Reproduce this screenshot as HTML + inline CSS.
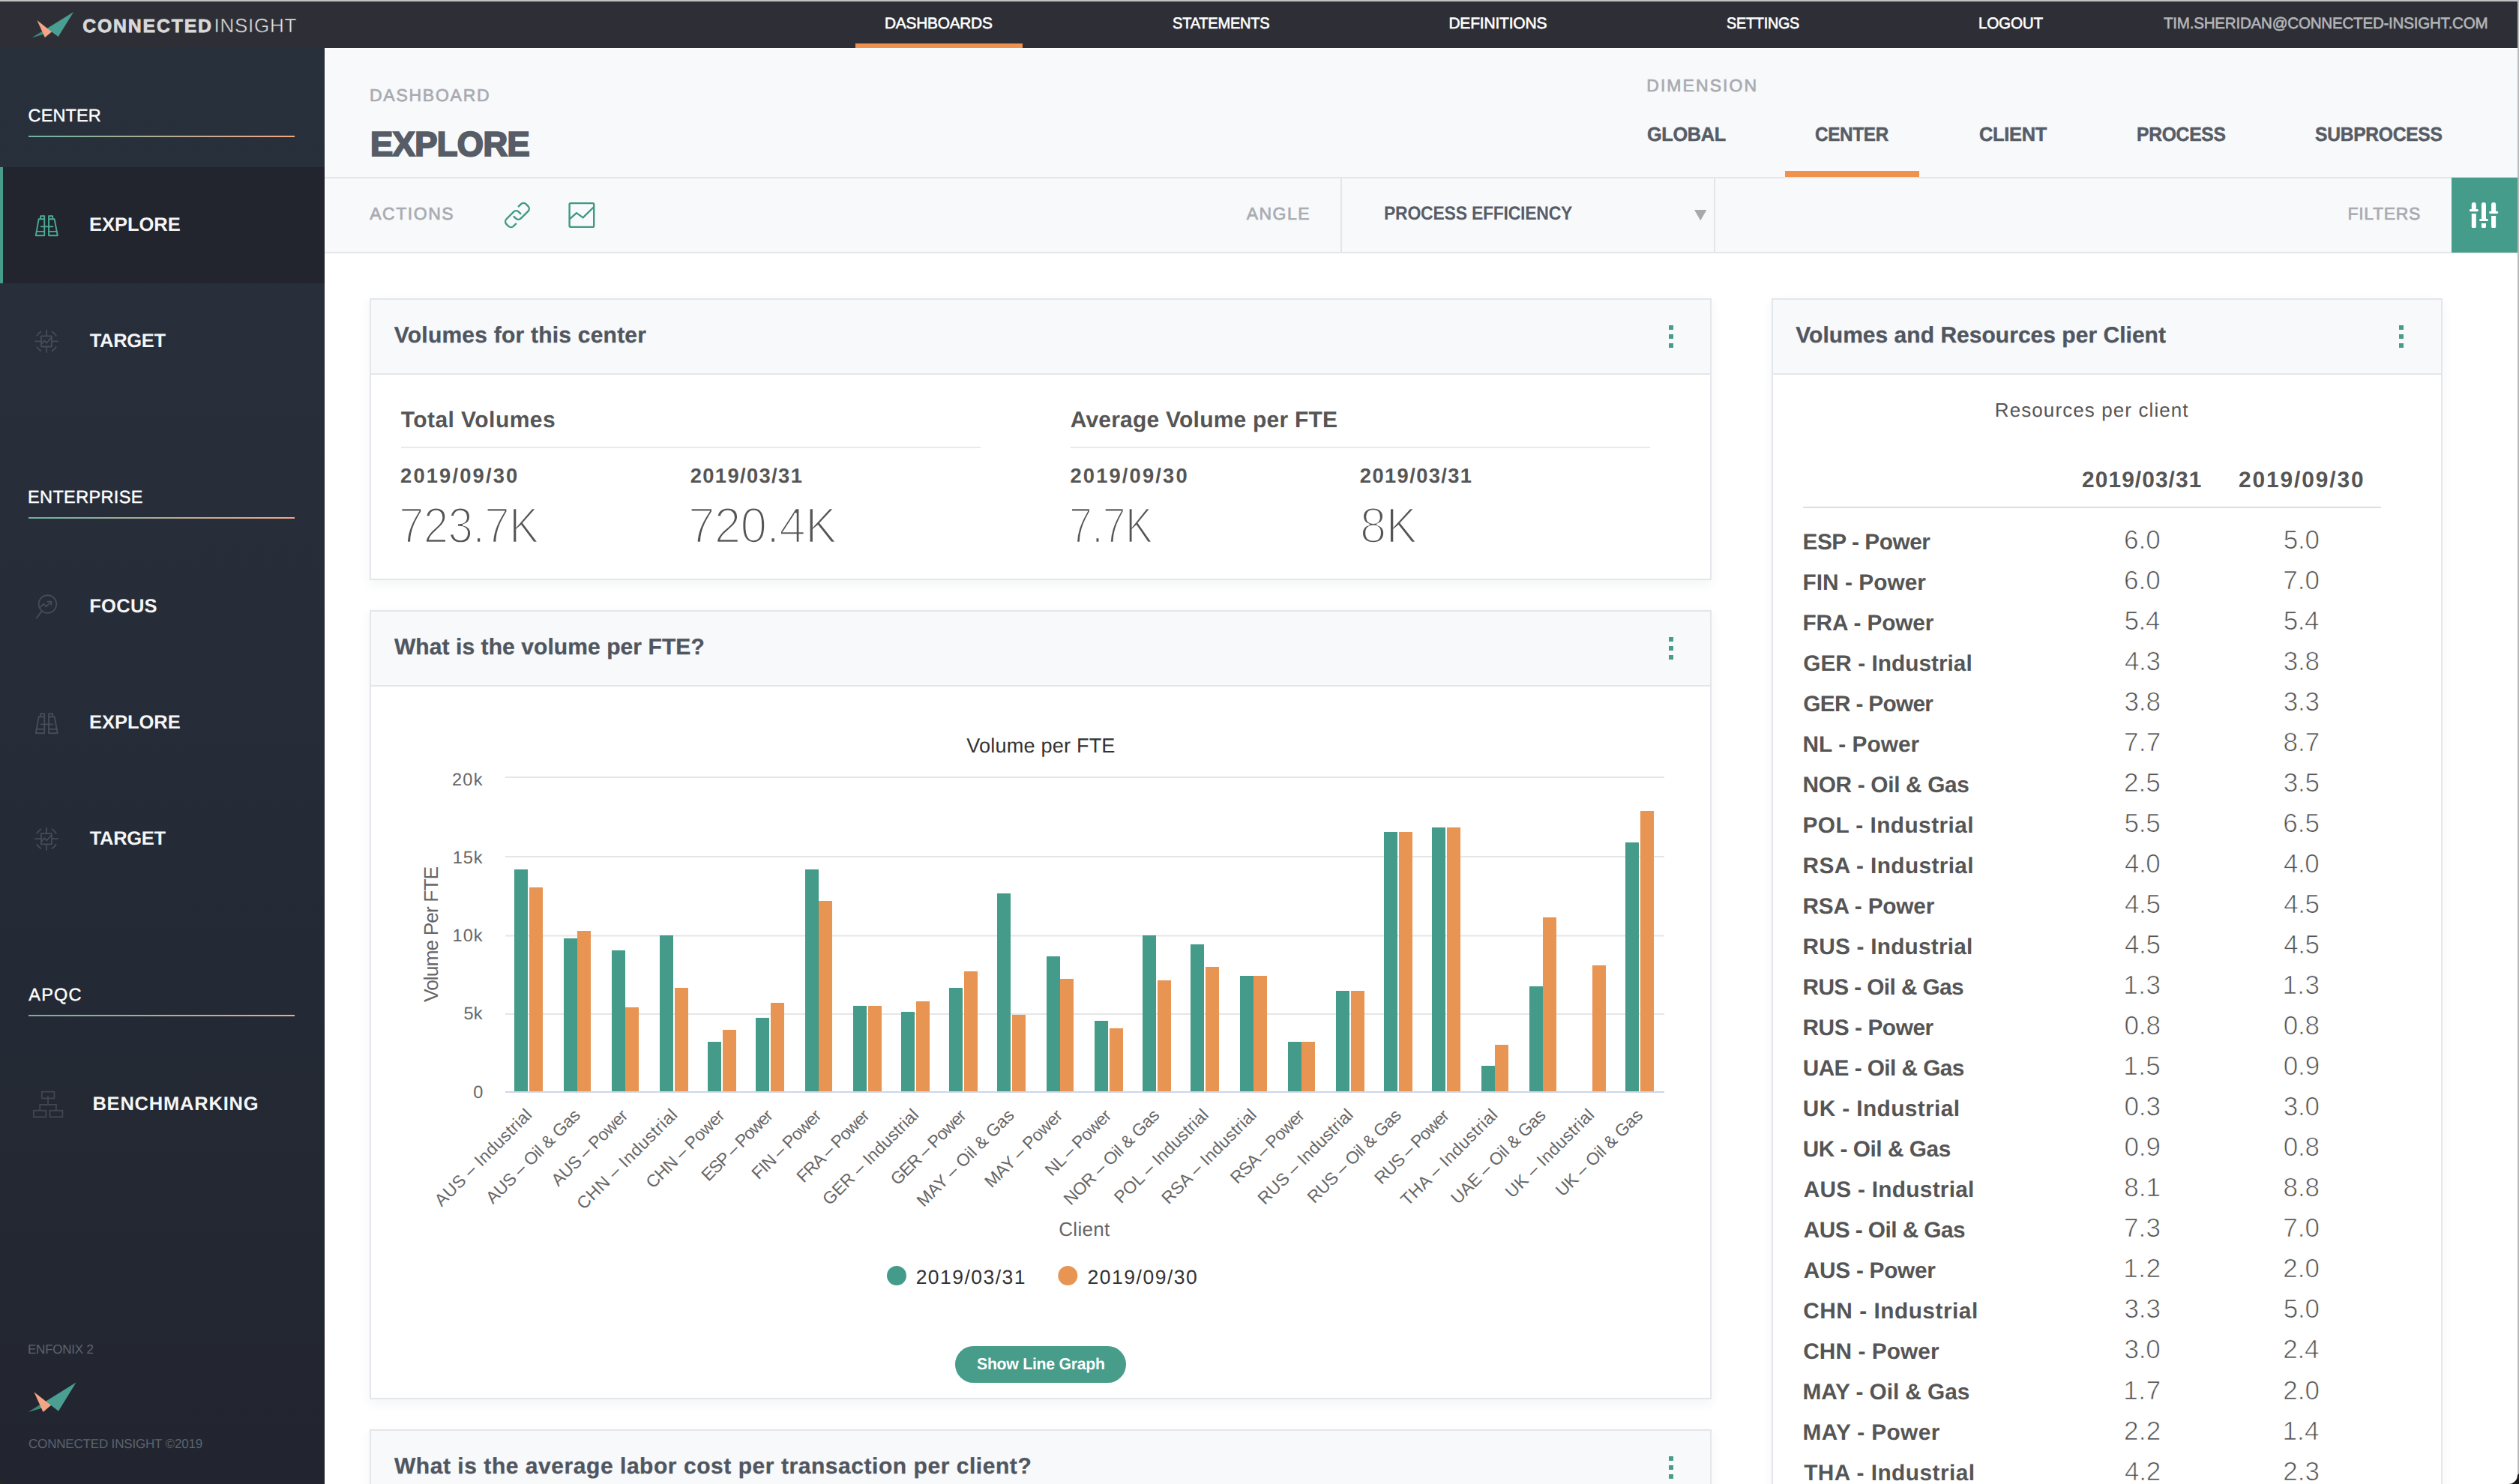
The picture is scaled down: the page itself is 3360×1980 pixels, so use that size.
<!DOCTYPE html>
<html lang="en"><head><meta charset="utf-8"><title>Connected Insight - Explore</title>
<style>
html,body{margin:0;padding:0}
body{width:3360px;height:1980px;position:relative;overflow:hidden;background:#fff;font-family:"Liberation Sans",sans-serif;}
.t{position:absolute;white-space:nowrap;line-height:1;transform-origin:0 50%;text-rendering:geometricPrecision;}
.a{position:absolute;}
.thin{-webkit-text-stroke:1.1px #fff;}
.card{position:absolute;box-sizing:border-box;border:2px solid #e4e6eb;background:#fff;box-shadow:0 5px 14px rgba(40,50,70,0.055);}
.chd{position:absolute;left:0;top:0;right:0;height:98px;background:#f8f9fb;border-bottom:2px solid #e4e6eb;}
.dots{position:absolute;width:6px;height:6px;background:#479d8a;box-shadow:0 12px 0 #479d8a,0 24px 0 #479d8a;}
.gl{position:absolute;height:2px;background:linear-gradient(90deg,#6cb3a0,#f5a685);left:38px;width:355px;}
</style></head>
<body>
<div class="a" style="left:0;top:0;width:3360px;height:64px;background:#2e2f36"></div>
<div class="a" style="left:0;top:0;width:3360px;height:2px;background:#c2c2c2"></div>
<svg class="a" style="left:0;top:0" width="440" height="1980" viewBox="0 0 440 1980"><polygon points="43.3,49.9 98.1,15.9 77.7,49.1 69.0,42.4" fill="#4a9e92"/><polygon points="43.3,49.9 55.9,42.0 57.0,45.6" fill="#3c8576"/><polygon points="49.4,27.1 69.0,42.4 59.9,50.1" fill="#f4a585"/></svg>
<span class="t" id="t0" style="left:110.18px;top:24px;font-size:24.8px;font-weight:700;color:#d9d9d9;letter-spacing:1.850px;-webkit-text-stroke:0.8px #d9d9d9;">CONNECTED</span>
<span class="t" id="t1" style="left:285.60px;top:21px;font-size:26px;font-weight:400;color:#dcdcdc;letter-spacing:0.707px;-webkit-text-stroke:0.4px #2e2f36;">INSIGHT</span>
<span class="t" id="t2" style="left:1180.49px;top:21px;font-size:21px;font-weight:400;color:#ffffff;letter-spacing:-0.252px;transform:scaleX(0.9938);-webkit-text-stroke:0.6px #ffffff;">DASHBOARDS</span>
<span class="t" id="t3" style="left:1563.79px;top:21px;font-size:21px;font-weight:400;color:#ffffff;letter-spacing:-0.252px;transform:scaleX(0.9554);-webkit-text-stroke:0.6px #ffffff;">STATEMENTS</span>
<span class="t" id="t4" style="left:1932.38px;top:21px;font-size:21px;font-weight:400;color:#ffffff;letter-spacing:-0.193px;-webkit-text-stroke:0.6px #ffffff;">DEFINITIONS</span>
<span class="t" id="t5" style="left:2302.70px;top:21px;font-size:21px;font-weight:400;color:#ffffff;letter-spacing:-0.252px;transform:scaleX(0.9424);-webkit-text-stroke:0.6px #ffffff;">SETTINGS</span>
<span class="t" id="t6" style="left:2639.20px;top:21px;font-size:21px;font-weight:400;color:#ffffff;letter-spacing:-0.252px;transform:scaleX(0.9857);-webkit-text-stroke:0.6px #ffffff;">LOGOUT</span>
<span class="t" id="t7" style="left:2885.94px;top:21px;font-size:21px;font-weight:400;color:#b4b5b8;letter-spacing:-0.252px;transform:scaleX(0.9807);-webkit-text-stroke:0.6px #b4b5b8;">TIM.SHERIDAN@CONNECTED-INSIGHT.COM</span>
<div class="a" style="left:1141px;top:58px;width:223px;height:6px;background:#f0914d"></div>
<div class="a" style="left:0;top:64px;width:433px;height:1916px;background:linear-gradient(180deg,#28303c 0%,#272e3a 30%,#242a35 65%,#22252f 100%)"></div>
<div class="a" style="left:0;top:223px;width:433px;height:155px;background:#22252e"></div>
<div class="a" style="left:0;top:223px;width:4px;height:155px;background:#479d8a"></div>
<span class="t" id="t8" style="left:37.61px;top:143px;font-size:23.5px;font-weight:400;color:#ffffff;letter-spacing:0.092px;-webkit-text-stroke:0.4px #fff;">CENTER</span>
<div class="gl" style="top:181.1px"></div>
<span class="t" id="t9" style="left:37.07px;top:652px;font-size:23.5px;font-weight:400;color:#ffffff;letter-spacing:0.352px;-webkit-text-stroke:0.4px #fff;">ENTERPRISE</span>
<div class="gl" style="top:690.3px"></div>
<span class="t" id="t10" style="left:38.35px;top:1316px;font-size:23.5px;font-weight:400;color:#ffffff;letter-spacing:1.211px;-webkit-text-stroke:0.4px #fff;">APQC</span>
<div class="gl" style="top:1354.0px"></div>
<span class="t" id="t11" style="left:118.99px;top:288px;font-size:25.5px;font-weight:700;color:#f6f6f6;letter-spacing:-0.029px;">EXPLORE</span>
<span class="t" id="t12" style="left:119.71px;top:443px;font-size:25.5px;font-weight:700;color:#f6f6f6;letter-spacing:-0.306px;">TARGET</span>
<span class="t" id="t13" style="left:119.19px;top:797px;font-size:25.5px;font-weight:700;color:#f6f6f6;letter-spacing:0.288px;">FOCUS</span>
<span class="t" id="t14" style="left:118.99px;top:952px;font-size:25.5px;font-weight:700;color:#f6f6f6;letter-spacing:-0.029px;">EXPLORE</span>
<span class="t" id="t15" style="left:119.71px;top:1107px;font-size:25.5px;font-weight:700;color:#f6f6f6;letter-spacing:-0.306px;">TARGET</span>
<span class="t" id="t16" style="left:123.39px;top:1461px;font-size:25.5px;font-weight:700;color:#f6f6f6;letter-spacing:0.790px;">BENCHMARKING</span>
<svg class="a" style="left:0;top:0" width="433" height="1980" viewBox="0 0 433 1980"><g fill="none" stroke="#4cab95" stroke-width="1.9" stroke-linejoin="round" stroke-linecap="round"><path d="M54.1 292.20 V288.20 H59.25 V292.20"/><path d="M51.7 292.20 H59.25 V314.20 H47.8 Z"/><path d="M48.75 308.85 H59.25"/><path d="M65.05 292.20 V288.20 H70.2 V292.20"/><path d="M72.55 292.20 H65.05 V314.20 H76.8 Z"/><path d="M65.05 308.85 H75.8"/><path d="M54.6 302.35 H70.5"/></g><g fill="none" stroke="#474c57" stroke-width="1.8" stroke-linecap="round" stroke-linejoin="round"><rect x="55.0" y="448.40" width="13.9" height="14.1"/><path d="M62 440.80 V448.40 M62 462.50 V470.10 M46.95 455.40 H55 M68.9 455.40 H76.9"/><path d="M74.75 462.91 A14.8 14.8 0 0 1 69.51 468.15"/><path d="M54.49 468.15 A14.8 14.8 0 0 1 49.25 462.91"/><path d="M49.25 447.89 A14.8 14.8 0 0 1 54.49 442.65"/><path d="M69.51 442.65 A14.8 14.8 0 0 1 74.75 447.89"/><path d="M55.5 458.60 L59.25 454.40 L62.3 457.50 L68.35 450.70"/></g><g fill="none" stroke="#474c57" stroke-width="1.8" stroke-linecap="round" stroke-linejoin="round"><circle cx="63.46" cy="806.07" r="11.8"/><path d="M55.6 815.4 L48.8 824.6"/><path d="M53.7 810.1 L58.2 805.6 L61.4 809.3 L68.3 802.7"/><path d="M63.5 802.55 H68.3 V806.9"/></g><g fill="none" stroke="#474c57" stroke-width="1.9" stroke-linejoin="round" stroke-linecap="round"><path d="M54.1 956.20 V952.20 H59.25 V956.20"/><path d="M51.7 956.20 H59.25 V978.20 H47.8 Z"/><path d="M48.75 972.85 H59.25"/><path d="M65.05 956.20 V952.20 H70.2 V956.20"/><path d="M72.55 956.20 H65.05 V978.20 H76.8 Z"/><path d="M65.05 972.85 H75.8"/><path d="M54.6 966.35 H70.5"/></g><g fill="none" stroke="#474c57" stroke-width="1.8" stroke-linecap="round" stroke-linejoin="round"><rect x="55.0" y="1112.20" width="13.9" height="14.1"/><path d="M62 1104.60 V1112.20 M62 1126.30 V1133.90 M46.95 1119.20 H55 M68.9 1119.20 H76.9"/><path d="M74.75 1126.71 A14.8 14.8 0 0 1 69.51 1131.95"/><path d="M54.49 1131.95 A14.8 14.8 0 0 1 49.25 1126.71"/><path d="M49.25 1111.69 A14.8 14.8 0 0 1 54.49 1106.45"/><path d="M69.51 1106.45 A14.8 14.8 0 0 1 74.75 1111.69"/><path d="M55.5 1122.40 L59.25 1118.20 L62.3 1121.30 L68.35 1114.50"/></g><g fill="none" stroke="#414650" stroke-width="1.8" stroke-linejoin="miter"><rect x="55.83" y="1456.6" width="16.57" height="8.8"/><path d="M64 1462.2 V1473.8 M53.2 1481.7 V1473.8 H74.9 V1481.7"/><rect x="44.8" y="1481.7" width="16.5" height="8.6"/><rect x="66.5" y="1481.7" width="16.9" height="8.6"/></g></svg>
<span class="t" id="t17" style="left:37.41px;top:1792px;font-size:17.2px;font-weight:400;color:#5d646f;letter-spacing:-0.206px;transform:scaleX(0.9861);">ENFONIX 2</span>
<svg class="a" style="left:0;top:0" width="440" height="1980" viewBox="0 0 440 1980"><polygon points="38.4,1883.7 101.5,1844.5 78.0,1882.7 68.0,1875.0" fill="#4a9e92"/><polygon points="38.4,1883.7 52.9,1874.6 54.2,1878.7" fill="#3c8576"/><polygon points="45.4,1857.3 68.0,1875.0 57.5,1883.9" fill="#f4a585"/></svg>
<span class="t" id="t18" style="left:37.93px;top:1918px;font-size:17.2px;font-weight:400;color:#5d646f;letter-spacing:-0.206px;transform:scaleX(0.9915);">CONNECTED INSIGHT ©2019</span>
<div class="a" style="left:434px;top:65px;width:2924px;height:273px;background:#f8f9fb"></div>
<div class="a" style="left:433px;top:236px;width:2925px;height:2px;background:#e3e5ea"></div>
<div class="a" style="left:433px;top:336px;width:2925px;height:2px;background:#e3e5ea"></div>
<span class="t" id="t19" style="left:493.01px;top:116px;font-size:23px;font-weight:400;color:#a9abb1;letter-spacing:1.736px;-webkit-text-stroke:0.7px #a9abb1;">DASHBOARD</span>
<span class="t" id="t20" style="left:493.88px;top:169px;font-size:46px;font-weight:700;color:#575d67;letter-spacing:-0.552px;transform:scaleX(0.9823);-webkit-text-stroke:2.2px #575d67;">EXPLORE</span>
<span class="t" id="t21" style="left:2196.21px;top:103px;font-size:23px;font-weight:400;color:#a9abb1;letter-spacing:2.065px;-webkit-text-stroke:0.7px #a9abb1;">DIMENSION</span>
<span class="t" id="t22" style="left:2196.66px;top:166px;font-size:26.2px;font-weight:700;color:#575d67;letter-spacing:-0.314px;transform:scaleX(0.9644);-webkit-text-stroke:0.5px #575d67;">GLOBAL</span>
<span class="t" id="t23" style="left:2421.31px;top:166px;font-size:26.2px;font-weight:700;color:#575d67;letter-spacing:-0.314px;transform:scaleX(0.9255);-webkit-text-stroke:0.5px #575d67;">CENTER</span>
<span class="t" id="t24" style="left:2639.86px;top:166px;font-size:26.2px;font-weight:700;color:#575d67;letter-spacing:-0.314px;transform:scaleX(0.9702);-webkit-text-stroke:0.5px #575d67;">CLIENT</span>
<span class="t" id="t25" style="left:2849.95px;top:166px;font-size:26.2px;font-weight:700;color:#575d67;letter-spacing:-0.314px;transform:scaleX(0.9425);-webkit-text-stroke:0.5px #575d67;">PROCESS</span>
<span class="t" id="t26" style="left:3088.29px;top:166px;font-size:26.2px;font-weight:700;color:#575d67;letter-spacing:-0.314px;transform:scaleX(0.9415);-webkit-text-stroke:0.5px #575d67;">SUBPROCESS</span>
<div class="a" style="left:2381px;top:228px;width:179px;height:8px;background:#f0914d"></div>
<span class="t" id="t27" style="left:493.26px;top:274px;font-size:23px;font-weight:400;color:#a9abb1;letter-spacing:1.528px;-webkit-text-stroke:0.7px #a9abb1;">ACTIONS</span>
<span class="t" id="t28" style="left:1662.76px;top:274px;font-size:23px;font-weight:400;color:#a9abb1;letter-spacing:1.462px;-webkit-text-stroke:0.7px #a9abb1;">ANGLE</span>
<span class="t" id="t29" style="left:1846.06px;top:273px;font-size:25.4px;font-weight:700;color:#575d67;letter-spacing:-0.305px;transform:scaleX(0.9077);">PROCESS EFFICIENCY</span>
<span class="t" id="t30" style="left:3131.61px;top:274px;font-size:23px;font-weight:400;color:#a9abb1;letter-spacing:0.645px;-webkit-text-stroke:0.7px #a9abb1;">FILTERS</span>
<div class="a" style="left:1788px;top:238px;width:2px;height:98px;background:#e3e5ea"></div>
<div class="a" style="left:2286px;top:238px;width:2px;height:98px;background:#e3e5ea"></div>
<svg class="a" style="left:2260px;top:280px" width="17" height="15"><polygon points="0,0 16.4,0 8.2,14.2" fill="#a9a9a9"/></svg>
<div class="a" style="left:3270px;top:237px;width:88px;height:100px;background:#469c8a"></div>
<svg class="a" style="left:660px;top:260px" width="150" height="56" viewBox="660 260 150 56"><g fill="none" stroke="#3f9985" stroke-width="2.4" stroke-linecap="round" stroke-linejoin="round"><path transform="translate(694.85,281.9) rotate(-45)" d="M2.4 -6.70 H6.80 A4.8 4.8 0 0 1 11.60 -1.90 V1.90 A4.8 4.8 0 0 1 6.80 6.70 H-6.80 A4.8 4.8 0 0 1 -11.60 1.90 V-1.5"/><path transform="translate(685.06,292.19) rotate(135)" d="M2.4 -6.70 H6.80 A4.8 4.8 0 0 1 11.60 -1.90 V1.90 A4.8 4.8 0 0 1 6.80 6.70 H-6.80 A4.8 4.8 0 0 1 -11.60 1.90 V-1.5"/><rect x="759.6" y="271.1" width="32.6" height="31.8" rx="1.6"/><path stroke-linecap="butt" d="M760.05 292.2 L769 284.1 L777.6 290.4 L792.2 276.0"/></g></svg><svg class="a" style="left:3270px;top:238px" width="88" height="99" viewBox="3270 238 88 99"><g fill="#ffffff"><path d="M3296.80 279.60 V273.00 a3 3 0 0 1 6 0 V279.60 Z"/><rect x="3293.90" y="279.05" width="11.9" height="3.1" rx="1.55"/><path d="M3296.80 285.10 H3302.80 V302.6 a1.5 1.5 0 0 1 -1.5 1.5 h-3 a1.5 1.5 0 0 1 -1.5 -1.5 Z"/><path d="M3309.95 292.40 V273.00 a3 3 0 0 1 6 0 V292.40 Z"/><rect x="3307.05" y="291.90" width="11.9" height="3.1" rx="1.55"/><path d="M3309.95 298.00 H3315.95 V302.6 a1.5 1.5 0 0 1 -1.5 1.5 h-3 a1.5 1.5 0 0 1 -1.5 -1.5 Z"/><path d="M3323.10 282.30 V273.00 a3 3 0 0 1 6 0 V282.30 Z"/><rect x="3320.20" y="281.80" width="11.9" height="3.1" rx="1.55"/><path d="M3323.10 287.90 H3329.10 V302.6 a1.5 1.5 0 0 1 -1.5 1.5 h-3 a1.5 1.5 0 0 1 -1.5 -1.5 Z"/></g></svg>
<div class="card" style="left:493px;top:398px;width:1790px;height:376px"><div class="chd"></div></div>
<span class="t" id="t31" style="left:525.79px;top:433px;font-size:30px;font-weight:700;color:#50565f;letter-spacing:0.226px;-webkit-text-stroke:0.3px #50565f;">Volumes for this center</span>
<div class="dots" style="left:2226px;top:434px"></div>
<span class="t" id="t32" style="left:534.66px;top:546px;font-size:30px;font-weight:700;color:#555555;letter-spacing:0.448px;">Total Volumes</span>
<div class="a" style="left:535px;top:596px;width:773px;height:2px;background:#e8e9ec"></div>
<span class="t" id="t33" style="left:1427.65px;top:546px;font-size:30px;font-weight:700;color:#555555;letter-spacing:0.221px;">Average Volume per FTE</span>
<div class="a" style="left:1428px;top:596px;width:773px;height:2px;background:#e8e9ec"></div>
<span class="t" id="t34" style="left:534.05px;top:621px;font-size:27.3px;font-weight:700;color:#555555;letter-spacing:2.171px;">2019/09/30</span>
<span class="t" id="t35" style="left:920.65px;top:621px;font-size:27.3px;font-weight:700;color:#555555;letter-spacing:1.398px;">2019/03/31</span>
<span class="t" id="t36" style="left:1427.45px;top:621px;font-size:27.3px;font-weight:700;color:#555555;letter-spacing:2.171px;">2019/09/30</span>
<span class="t" id="t37" style="left:1813.85px;top:621px;font-size:27.3px;font-weight:700;color:#555555;letter-spacing:1.398px;">2019/03/31</span>
<span class="t" id="t38" style="left:531.91px;top:668px;font-size:67px;font-weight:400;color:#555555;letter-spacing:-0.804px;transform:scaleX(0.8984);-webkit-text-stroke:2.7px #fff;">723.7K</span>
<span class="t" id="t39" style="left:918.33px;top:668px;font-size:67px;font-weight:400;color:#555555;letter-spacing:-0.804px;transform:scaleX(0.9532);-webkit-text-stroke:2.7px #fff;">720.4K</span>
<span class="t" id="t40" style="left:1425.56px;top:668px;font-size:67px;font-weight:400;color:#555555;letter-spacing:-0.804px;transform:scaleX(0.8268);-webkit-text-stroke:2.7px #fff;">7.7K</span>
<span class="t" id="t41" style="left:1814.45px;top:668px;font-size:67px;font-weight:400;color:#555555;letter-spacing:-0.804px;transform:scaleX(0.9447);-webkit-text-stroke:2.7px #fff;">8K</span>
<div class="card" style="left:493px;top:814px;width:1790px;height:1053px"><div class="chd"></div></div>
<span class="t" id="t42" style="left:525.97px;top:849px;font-size:30px;font-weight:700;color:#50565f;letter-spacing:0.078px;-webkit-text-stroke:0.3px #50565f;">What is the volume per FTE?</span>
<div class="dots" style="left:2226px;top:850px"></div>
<svg class="a" style="left:495px;top:916px" width="1786" height="948" viewBox="495 916 1786 948" font-family="Liberation Sans, sans-serif" text-rendering="geometricPrecision">
<rect x="674" y="1036.0" width="1546" height="2" fill="#e6e6e6"/>
<rect x="674" y="1142.0" width="1546" height="2" fill="#e6e6e6"/>
<rect x="674" y="1247.5" width="1546" height="2" fill="#e6e6e6"/>
<rect x="674" y="1352.0" width="1546" height="2" fill="#e6e6e6"/>
<rect x="686" y="1160" width="18" height="296" fill="#459b89"/>
<rect x="706" y="1184" width="18" height="272" fill="#e89554"/>
<rect x="752" y="1252" width="18" height="204" fill="#459b89"/>
<rect x="770" y="1242" width="18" height="214" fill="#e89554"/>
<rect x="816" y="1268" width="18" height="188" fill="#459b89"/>
<rect x="834" y="1344" width="18" height="112" fill="#e89554"/>
<rect x="880" y="1248" width="18" height="208" fill="#459b89"/>
<rect x="900" y="1318" width="18" height="138" fill="#e89554"/>
<rect x="944" y="1390" width="18" height="66" fill="#459b89"/>
<rect x="964" y="1374" width="18" height="82" fill="#e89554"/>
<rect x="1008" y="1358" width="18" height="98" fill="#459b89"/>
<rect x="1028" y="1338" width="18" height="118" fill="#e89554"/>
<rect x="1074" y="1160" width="18" height="296" fill="#459b89"/>
<rect x="1092" y="1202" width="18" height="254" fill="#e89554"/>
<rect x="1138" y="1342" width="18" height="114" fill="#459b89"/>
<rect x="1158" y="1342" width="18" height="114" fill="#e89554"/>
<rect x="1202" y="1350" width="18" height="106" fill="#459b89"/>
<rect x="1222" y="1336" width="18" height="120" fill="#e89554"/>
<rect x="1266" y="1318" width="18" height="138" fill="#459b89"/>
<rect x="1286" y="1296" width="18" height="160" fill="#e89554"/>
<rect x="1330" y="1192" width="18" height="264" fill="#459b89"/>
<rect x="1350" y="1354" width="18" height="102" fill="#e89554"/>
<rect x="1396" y="1276" width="18" height="180" fill="#459b89"/>
<rect x="1414" y="1306" width="18" height="150" fill="#e89554"/>
<rect x="1460" y="1362" width="18" height="94" fill="#459b89"/>
<rect x="1480" y="1372" width="18" height="84" fill="#e89554"/>
<rect x="1524" y="1248" width="18" height="208" fill="#459b89"/>
<rect x="1544" y="1308" width="18" height="148" fill="#e89554"/>
<rect x="1588" y="1260" width="18" height="196" fill="#459b89"/>
<rect x="1608" y="1290" width="18" height="166" fill="#e89554"/>
<rect x="1654" y="1302" width="18" height="154" fill="#459b89"/>
<rect x="1672" y="1302" width="18" height="154" fill="#e89554"/>
<rect x="1718" y="1390" width="18" height="66" fill="#459b89"/>
<rect x="1736" y="1390" width="18" height="66" fill="#e89554"/>
<rect x="1782" y="1322" width="18" height="134" fill="#459b89"/>
<rect x="1802" y="1322" width="18" height="134" fill="#e89554"/>
<rect x="1846" y="1110" width="18" height="346" fill="#459b89"/>
<rect x="1866" y="1110" width="18" height="346" fill="#e89554"/>
<rect x="1910" y="1104" width="18" height="352" fill="#459b89"/>
<rect x="1930" y="1104" width="18" height="352" fill="#e89554"/>
<rect x="1976" y="1422" width="18" height="34" fill="#459b89"/>
<rect x="1994" y="1394" width="18" height="62" fill="#e89554"/>
<rect x="2040" y="1316" width="18" height="140" fill="#459b89"/>
<rect x="2058" y="1224" width="18" height="232" fill="#e89554"/>
<rect x="2124" y="1288" width="18" height="168" fill="#e89554"/>
<rect x="2168" y="1124" width="18" height="332" fill="#459b89"/>
<rect x="2188" y="1082" width="18" height="374" fill="#e89554"/>
<rect x="674" y="1456" width="1546" height="2" fill="#ccd6eb"/>
<text transform="translate(583.8,1246.9) rotate(-90)" font-size="26.4" fill="#666666" text-anchor="middle" letter-spacing="-0.95">Volume Per FTE</text>
<circle cx="1196" cy="1702" r="13" fill="#459b89"/>
<circle cx="1424.3" cy="1702" r="13" fill="#e89554"/>
</svg>
<span class="t" id="t121" style="left:1289.28px;top:981px;font-size:27.1px;font-weight:400;color:#333333;letter-spacing:0.186px;">Volume per FTE</span>
<span class="t" id="t122" style="left:603.02px;top:1029px;font-size:23.5px;font-weight:400;color:#666666;letter-spacing:1.278px;">20k</span>
<span class="t" id="t123" style="left:603.81px;top:1133px;font-size:23.5px;font-weight:400;color:#666666;letter-spacing:0.882px;">15k</span>
<span class="t" id="t124" style="left:603.61px;top:1237px;font-size:23.5px;font-weight:400;color:#666666;letter-spacing:0.982px;">10k</span>
<span class="t" id="t125" style="left:618.56px;top:1341px;font-size:23.5px;font-weight:400;color:#666666;letter-spacing:0.078px;">5k</span>
<span class="t" id="t126" style="left:631.34px;top:1446px;font-size:23.5px;font-weight:400;color:#666666;">0</span>
<span class="t" id="t127" style="left:1412.28px;top:1627px;font-size:26px;font-weight:400;color:#666666;letter-spacing:0.285px;">Client</span>
<span class="t" id="t128" style="left:1221.67px;top:1691px;font-size:26.5px;font-weight:400;color:#333333;letter-spacing:1.476px;">2019/03/31</span>
<span class="t" id="t129" style="left:1450.47px;top:1691px;font-size:26.5px;font-weight:400;color:#333333;letter-spacing:1.525px;">2019/09/30</span>
<span class="t" id="t130" style="left:539.20px;top:1471px;font-size:23px;font-weight:400;color:#666666;letter-spacing:0.403px;transform:rotate(-45deg);transform-origin:170.71px 19px;">AUS – Industrial</span>
<span class="t" id="t131" style="left:608.57px;top:1471px;font-size:23px;font-weight:400;color:#666666;letter-spacing:-0.335px;transform:rotate(-45deg);transform-origin:165.76px 19px;">AUS – Oil &amp; Gas</span>
<span class="t" id="t132" style="left:706.08px;top:1471px;font-size:23px;font-weight:400;color:#666666;letter-spacing:-0.501px;transform:rotate(-45deg);transform-origin:132.67px 19px;">AUS – Power</span>
<span class="t" id="t133" style="left:726.50px;top:1471px;font-size:23px;font-weight:400;color:#666666;letter-spacing:0.632px;transform:rotate(-45deg);transform-origin:176.67px 19px;">CHN – Industrial</span>
<span class="t" id="t134" style="left:830.94px;top:1471px;font-size:23px;font-weight:400;color:#666666;letter-spacing:-0.358px;transform:rotate(-45deg);transform-origin:136.65px 19px;">CHN – Power</span>
<span class="t" id="t135" style="left:908.88px;top:1471px;font-size:23px;font-weight:400;color:#666666;letter-spacing:-1.287px;transform:rotate(-45deg);transform-origin:123.13px 19px;">ESP – Power</span>
<span class="t" id="t136" style="left:976.70px;top:1471px;font-size:23px;font-weight:400;color:#666666;letter-spacing:-0.772px;transform:rotate(-45deg);transform-origin:119.73px 19px;">FIN – Power</span>
<span class="t" id="t137" style="left:1034.90px;top:1471px;font-size:23px;font-weight:400;color:#666666;letter-spacing:-0.916px;transform:rotate(-45deg);transform-origin:125.95px 19px;">FRA – Power</span>
<span class="t" id="t138" style="left:1056.53px;top:1471px;font-size:23px;font-weight:400;color:#666666;letter-spacing:0.102px;transform:rotate(-45deg);transform-origin:168.74px 19px;">GER – Industrial</span>
<span class="t" id="t139" style="left:1158.71px;top:1471px;font-size:23px;font-weight:400;color:#666666;letter-spacing:-0.925px;transform:rotate(-45deg);transform-origin:130.98px 19px;">GER – Power</span>
<span class="t" id="t140" style="left:1182.48px;top:1471px;font-size:23px;font-weight:400;color:#666666;letter-spacing:0.054px;transform:rotate(-45deg);transform-origin:171.63px 19px;">MAY – Oil &amp; Gas</span>
<span class="t" id="t141" style="left:1283.10px;top:1471px;font-size:23px;font-weight:400;color:#666666;letter-spacing:-0.267px;transform:rotate(-45deg);transform-origin:135.43px 19px;">MAY – Power</span>
<span class="t" id="t142" style="left:1369.58px;top:1471px;font-size:23px;font-weight:400;color:#666666;letter-spacing:-0.618px;transform:rotate(-45deg);transform-origin:113.37px 19px;">NL – Power</span>
<span class="t" id="t143" style="left:1378.99px;top:1471px;font-size:23px;font-weight:400;color:#666666;letter-spacing:-0.421px;transform:rotate(-45deg);transform-origin:168.38px 19px;">NOR – Oil &amp; Gas</span>
<span class="t" id="t144" style="left:1446.52px;top:1471px;font-size:23px;font-weight:400;color:#666666;letter-spacing:0.182px;transform:rotate(-45deg);transform-origin:165.27px 19px;">POL – Industrial</span>
<span class="t" id="t145" style="left:1509.81px;top:1471px;font-size:23px;font-weight:400;color:#666666;letter-spacing:0.201px;transform:rotate(-45deg);transform-origin:166.40px 19px;">RSA – Industrial</span>
<span class="t" id="t146" style="left:1612.55px;top:1471px;font-size:23px;font-weight:400;color:#666666;letter-spacing:-0.834px;transform:rotate(-45deg);transform-origin:128.08px 19px;">RSA – Power</span>
<span class="t" id="t147" style="left:1637.66px;top:1471px;font-size:23px;font-weight:400;color:#666666;letter-spacing:0.097px;transform:rotate(-45deg);transform-origin:167.39px 19px;">RUS – Industrial</span>
<span class="t" id="t148" style="left:1704.77px;top:1471px;font-size:23px;font-weight:400;color:#666666;letter-spacing:-0.501px;transform:rotate(-45deg);transform-origin:164.70px 19px;">RUS – Oil &amp; Gas</span>
<span class="t" id="t149" style="left:1804.68px;top:1471px;font-size:23px;font-weight:400;color:#666666;letter-spacing:-0.974px;transform:rotate(-45deg);transform-origin:129.21px 19px;">RUS – Power</span>
<span class="t" id="t150" style="left:1828.47px;top:1471px;font-size:23px;font-weight:400;color:#666666;letter-spacing:0.516px;transform:rotate(-45deg);transform-origin:169.84px 19px;">THA – Industrial</span>
<span class="t" id="t151" style="left:1896.16px;top:1471px;font-size:23px;font-weight:400;color:#666666;letter-spacing:-0.277px;transform:rotate(-45deg);transform-origin:166.57px 19px;">UAE – Oil &amp; Gas</span>
<span class="t" id="t152" style="left:1972.46px;top:1471px;font-size:23px;font-weight:400;color:#666666;letter-spacing:0.384px;transform:rotate(-45deg);transform-origin:154.69px 19px;">UK – Industrial</span>
<span class="t" id="t153" style="left:2039.57px;top:1471px;font-size:23px;font-weight:400;color:#666666;letter-spacing:-0.239px;transform:rotate(-45deg);transform-origin:152.00px 19px;">UK – Oil &amp; Gas</span>
<div class="a" style="left:1274px;top:1796px;width:228px;height:49px;border-radius:24.5px;background:#479d8a"></div>
<span class="t" id="t43" style="left:1302.69px;top:1810px;font-size:21.5px;font-weight:700;color:#ffffff;letter-spacing:-0.258px;transform:scaleX(0.9870);">Show Line Graph</span>
<div class="card" style="left:493px;top:1907px;width:1790px;height:200px"><div class="chd"></div></div>
<span class="t" id="t44" style="left:525.97px;top:1942px;font-size:30px;font-weight:700;color:#50565f;letter-spacing:0.547px;-webkit-text-stroke:0.3px #50565f;">What is the average labor cost per transaction per client?</span>
<div class="dots" style="left:2226px;top:1943px"></div>
<div class="card" style="left:2363px;top:398px;width:895px;height:1700px"><div class="chd"></div></div>
<span class="t" id="t45" style="left:2395.29px;top:433px;font-size:30px;font-weight:700;color:#50565f;letter-spacing:0.024px;-webkit-text-stroke:0.3px #50565f;">Volumes and Resources per Client</span>
<div class="dots" style="left:3200px;top:434px"></div>
<span class="t" id="t46" style="left:2660.77px;top:534px;font-size:26px;font-weight:400;color:#555555;letter-spacing:1.096px;">Resources per client</span>
<span class="t" id="t47" style="left:2777.06px;top:626px;font-size:29.9px;font-weight:700;color:#555555;letter-spacing:1.073px;">2019/03/31</span>
<span class="t" id="t48" style="left:2986.06px;top:626px;font-size:29.9px;font-weight:700;color:#555555;letter-spacing:1.873px;">2019/09/30</span>
<div class="a" style="left:2405px;top:676px;width:771px;height:2px;background:#dcdde0"></div>
<span class="t" id="t49" style="left:2404.51px;top:709px;font-size:29.8px;font-weight:700;color:#555555;letter-spacing:-0.454px;">ESP - Power</span>
<span class="t" id="t50" style="left:2833.07px;top:703px;font-size:35px;font-weight:400;color:#555555;letter-spacing:-0.006px;-webkit-text-stroke:0.75px #fff;">6.0</span>
<span class="t" id="t51" style="left:3045.65px;top:703px;font-size:35px;font-weight:400;color:#555555;letter-spacing:-0.194px;-webkit-text-stroke:0.75px #fff;">5.0</span>
<span class="t" id="t52" style="left:2404.51px;top:763px;font-size:29.8px;font-weight:700;color:#555555;letter-spacing:0.054px;">FIN - Power</span>
<span class="t" id="t53" style="left:2833.07px;top:757px;font-size:35px;font-weight:400;color:#555555;letter-spacing:-0.006px;-webkit-text-stroke:0.75px #fff;">6.0</span>
<span class="t" id="t54" style="left:3045.26px;top:757px;font-size:35px;font-weight:400;color:#555555;-webkit-text-stroke:0.75px #fff;">7.0</span>
<span class="t" id="t55" style="left:2404.51px;top:817px;font-size:29.8px;font-weight:700;color:#555555;letter-spacing:-0.120px;">FRA - Power</span>
<span class="t" id="t56" style="left:2833.45px;top:811px;font-size:35px;font-weight:400;color:#555555;letter-spacing:-0.365px;-webkit-text-stroke:0.75px #fff;">5.4</span>
<span class="t" id="t57" style="left:3045.65px;top:811px;font-size:35px;font-weight:400;color:#555555;letter-spacing:-0.365px;-webkit-text-stroke:0.75px #fff;">5.4</span>
<span class="t" id="t58" style="left:2405.28px;top:871px;font-size:29.8px;font-weight:700;color:#555555;letter-spacing:0.018px;">GER - Industrial</span>
<span class="t" id="t59" style="left:2834.05px;top:865px;font-size:35px;font-weight:400;color:#555555;letter-spacing:-0.407px;-webkit-text-stroke:0.75px #fff;">4.3</span>
<span class="t" id="t60" style="left:3045.72px;top:865px;font-size:35px;font-weight:400;color:#555555;letter-spacing:-0.151px;-webkit-text-stroke:0.75px #fff;">3.8</span>
<span class="t" id="t61" style="left:2405.28px;top:925px;font-size:29.8px;font-weight:700;color:#555555;letter-spacing:-0.681px;">GER - Power</span>
<span class="t" id="t62" style="left:2833.52px;top:919px;font-size:35px;font-weight:400;color:#555555;letter-spacing:-0.151px;-webkit-text-stroke:0.75px #fff;">3.8</span>
<span class="t" id="t63" style="left:3045.72px;top:919px;font-size:35px;font-weight:400;color:#555555;letter-spacing:-0.143px;-webkit-text-stroke:0.75px #fff;">3.3</span>
<span class="t" id="t64" style="left:2404.51px;top:979px;font-size:29.8px;font-weight:700;color:#555555;letter-spacing:0.061px;">NL - Power</span>
<span class="t" id="t65" style="left:2833.06px;top:973px;font-size:35px;font-weight:400;color:#555555;letter-spacing:0.199px;-webkit-text-stroke:0.75px #fff;">7.7</span>
<span class="t" id="t66" style="left:3045.53px;top:973px;font-size:35px;font-weight:400;color:#555555;letter-spacing:0.062px;-webkit-text-stroke:0.75px #fff;">8.7</span>
<span class="t" id="t67" style="left:2404.51px;top:1033px;font-size:29.8px;font-weight:700;color:#555555;letter-spacing:-0.315px;">NOR - Oil &amp; Gas</span>
<span class="t" id="t68" style="left:2833.09px;top:1027px;font-size:35px;font-weight:400;color:#555555;letter-spacing:0.037px;-webkit-text-stroke:0.75px #fff;">2.5</span>
<span class="t" id="t69" style="left:3045.72px;top:1027px;font-size:35px;font-weight:400;color:#555555;letter-spacing:-0.177px;-webkit-text-stroke:0.75px #fff;">3.5</span>
<span class="t" id="t70" style="left:2404.51px;top:1087px;font-size:29.8px;font-weight:700;color:#555555;letter-spacing:0.454px;">POL - Industrial</span>
<span class="t" id="t71" style="left:2833.45px;top:1081px;font-size:35px;font-weight:400;color:#555555;letter-spacing:-0.143px;-webkit-text-stroke:0.75px #fff;">5.5</span>
<span class="t" id="t72" style="left:3045.27px;top:1081px;font-size:35px;font-weight:400;color:#555555;letter-spacing:0.045px;-webkit-text-stroke:0.75px #fff;">6.5</span>
<span class="t" id="t73" style="left:2404.51px;top:1141px;font-size:29.8px;font-weight:700;color:#555555;letter-spacing:0.381px;">RSA - Industrial</span>
<span class="t" id="t74" style="left:2834.05px;top:1135px;font-size:35px;font-weight:400;color:#555555;letter-spacing:-0.420px;transform:scaleX(0.9968);-webkit-text-stroke:0.75px #fff;">4.0</span>
<span class="t" id="t75" style="left:3046.25px;top:1135px;font-size:35px;font-weight:400;color:#555555;letter-spacing:-0.420px;transform:scaleX(0.9968);-webkit-text-stroke:0.75px #fff;">4.0</span>
<span class="t" id="t76" style="left:2404.51px;top:1195px;font-size:29.8px;font-weight:700;color:#555555;letter-spacing:-0.187px;">RSA - Power</span>
<span class="t" id="t77" style="left:2834.05px;top:1189px;font-size:35px;font-weight:400;color:#555555;letter-spacing:-0.420px;-webkit-text-stroke:0.75px #fff;">4.5</span>
<span class="t" id="t78" style="left:3046.25px;top:1189px;font-size:35px;font-weight:400;color:#555555;letter-spacing:-0.420px;-webkit-text-stroke:0.75px #fff;">4.5</span>
<span class="t" id="t79" style="left:2404.51px;top:1249px;font-size:29.8px;font-weight:700;color:#555555;letter-spacing:0.227px;">RUS - Industrial</span>
<span class="t" id="t80" style="left:2834.05px;top:1243px;font-size:35px;font-weight:400;color:#555555;letter-spacing:-0.420px;-webkit-text-stroke:0.75px #fff;">4.5</span>
<span class="t" id="t81" style="left:3046.25px;top:1243px;font-size:35px;font-weight:400;color:#555555;letter-spacing:-0.420px;-webkit-text-stroke:0.75px #fff;">4.5</span>
<span class="t" id="t82" style="left:2404.51px;top:1303px;font-size:29.8px;font-weight:700;color:#555555;letter-spacing:-0.601px;">RUS - Oil &amp; Gas</span>
<span class="t" id="t83" style="left:2832.18px;top:1297px;font-size:35px;font-weight:400;color:#555555;letter-spacing:0.524px;-webkit-text-stroke:0.75px #fff;">1.3</span>
<span class="t" id="t84" style="left:3044.38px;top:1297px;font-size:35px;font-weight:400;color:#555555;letter-spacing:0.524px;-webkit-text-stroke:0.75px #fff;">1.3</span>
<span class="t" id="t85" style="left:2404.51px;top:1357px;font-size:29.8px;font-weight:700;color:#555555;letter-spacing:-0.417px;">RUS - Power</span>
<span class="t" id="t86" style="left:2833.48px;top:1351px;font-size:35px;font-weight:400;color:#555555;letter-spacing:-0.134px;-webkit-text-stroke:0.75px #fff;">0.8</span>
<span class="t" id="t87" style="left:3045.68px;top:1351px;font-size:35px;font-weight:400;color:#555555;letter-spacing:-0.134px;-webkit-text-stroke:0.75px #fff;">0.8</span>
<span class="t" id="t88" style="left:2404.71px;top:1411px;font-size:29.8px;font-weight:700;color:#555555;letter-spacing:-0.559px;">UAE - Oil &amp; Gas</span>
<span class="t" id="t89" style="left:2832.18px;top:1405px;font-size:35px;font-weight:400;color:#555555;letter-spacing:0.490px;-webkit-text-stroke:0.75px #fff;">1.5</span>
<span class="t" id="t90" style="left:3045.68px;top:1405px;font-size:35px;font-weight:400;color:#555555;letter-spacing:-0.066px;-webkit-text-stroke:0.75px #fff;">0.9</span>
<span class="t" id="t91" style="left:2404.71px;top:1465px;font-size:29.8px;font-weight:700;color:#555555;letter-spacing:0.405px;">UK - Industrial</span>
<span class="t" id="t92" style="left:2833.48px;top:1459px;font-size:35px;font-weight:400;color:#555555;letter-spacing:-0.125px;-webkit-text-stroke:0.75px #fff;">0.3</span>
<span class="t" id="t93" style="left:3045.72px;top:1459px;font-size:35px;font-weight:400;color:#555555;letter-spacing:-0.228px;-webkit-text-stroke:0.75px #fff;">3.0</span>
<span class="t" id="t94" style="left:2404.71px;top:1519px;font-size:29.8px;font-weight:700;color:#555555;letter-spacing:-0.473px;">UK - Oil &amp; Gas</span>
<span class="t" id="t95" style="left:2833.48px;top:1513px;font-size:35px;font-weight:400;color:#555555;letter-spacing:-0.066px;-webkit-text-stroke:0.75px #fff;">0.9</span>
<span class="t" id="t96" style="left:3045.68px;top:1513px;font-size:35px;font-weight:400;color:#555555;letter-spacing:-0.134px;-webkit-text-stroke:0.75px #fff;">0.8</span>
<span class="t" id="t97" style="left:2405.76px;top:1573px;font-size:29.8px;font-weight:700;color:#555555;letter-spacing:0.277px;">AUS - Industrial</span>
<span class="t" id="t98" style="left:2833.33px;top:1567px;font-size:35px;font-weight:400;color:#555555;letter-spacing:0.037px;-webkit-text-stroke:0.75px #fff;">8.1</span>
<span class="t" id="t99" style="left:3045.53px;top:1567px;font-size:35px;font-weight:400;color:#555555;letter-spacing:-0.057px;-webkit-text-stroke:0.75px #fff;">8.8</span>
<span class="t" id="t100" style="left:2405.76px;top:1627px;font-size:29.8px;font-weight:700;color:#555555;letter-spacing:-0.548px;">AUS - Oil &amp; Gas</span>
<span class="t" id="t101" style="left:2833.06px;top:1621px;font-size:35px;font-weight:400;color:#555555;letter-spacing:0.088px;-webkit-text-stroke:0.75px #fff;">7.3</span>
<span class="t" id="t102" style="left:3045.26px;top:1621px;font-size:35px;font-weight:400;color:#555555;-webkit-text-stroke:0.75px #fff;">7.0</span>
<span class="t" id="t103" style="left:2405.76px;top:1681px;font-size:29.8px;font-weight:700;color:#555555;letter-spacing:-0.262px;">AUS - Power</span>
<span class="t" id="t104" style="left:2832.18px;top:1675px;font-size:35px;font-weight:400;color:#555555;letter-spacing:0.635px;-webkit-text-stroke:0.75px #fff;">1.2</span>
<span class="t" id="t105" style="left:3045.29px;top:1675px;font-size:35px;font-weight:400;color:#555555;letter-spacing:-0.014px;-webkit-text-stroke:0.75px #fff;">2.0</span>
<span class="t" id="t106" style="left:2405.28px;top:1735px;font-size:29.8px;font-weight:700;color:#555555;letter-spacing:0.519px;">CHN - Industrial</span>
<span class="t" id="t107" style="left:2833.52px;top:1729px;font-size:35px;font-weight:400;color:#555555;letter-spacing:-0.143px;-webkit-text-stroke:0.75px #fff;">3.3</span>
<span class="t" id="t108" style="left:3045.65px;top:1729px;font-size:35px;font-weight:400;color:#555555;letter-spacing:-0.194px;-webkit-text-stroke:0.75px #fff;">5.0</span>
<span class="t" id="t109" style="left:2405.28px;top:1789px;font-size:29.8px;font-weight:700;color:#555555;letter-spacing:0.090px;">CHN - Power</span>
<span class="t" id="t110" style="left:2833.52px;top:1783px;font-size:35px;font-weight:400;color:#555555;letter-spacing:-0.228px;-webkit-text-stroke:0.75px #fff;">3.0</span>
<span class="t" id="t111" style="left:3045.29px;top:1783px;font-size:35px;font-weight:400;color:#555555;letter-spacing:-0.185px;-webkit-text-stroke:0.75px #fff;">2.4</span>
<span class="t" id="t112" style="left:2404.51px;top:1843px;font-size:29.8px;font-weight:700;color:#555555;letter-spacing:-0.060px;">MAY - Oil &amp; Gas</span>
<span class="t" id="t113" style="left:2832.18px;top:1838px;font-size:35px;font-weight:400;color:#555555;letter-spacing:0.635px;-webkit-text-stroke:0.75px #fff;">1.7</span>
<span class="t" id="t114" style="left:3045.29px;top:1838px;font-size:35px;font-weight:400;color:#555555;letter-spacing:-0.014px;-webkit-text-stroke:0.75px #fff;">2.0</span>
<span class="t" id="t115" style="left:2404.51px;top:1897px;font-size:29.8px;font-weight:700;color:#555555;letter-spacing:0.390px;">MAY - Power</span>
<span class="t" id="t116" style="left:2833.09px;top:1892px;font-size:35px;font-weight:400;color:#555555;letter-spacing:0.182px;-webkit-text-stroke:0.75px #fff;">2.2</span>
<span class="t" id="t117" style="left:3044.38px;top:1892px;font-size:35px;font-weight:400;color:#555555;letter-spacing:0.268px;-webkit-text-stroke:0.75px #fff;">1.4</span>
<span class="t" id="t118" style="left:2406.17px;top:1951px;font-size:29.8px;font-weight:700;color:#555555;letter-spacing:0.482px;">THA - Industrial</span>
<span class="t" id="t119" style="left:2834.05px;top:1946px;font-size:35px;font-weight:400;color:#555555;letter-spacing:-0.296px;-webkit-text-stroke:0.75px #fff;">4.2</span>
<span class="t" id="t120" style="left:3045.29px;top:1946px;font-size:35px;font-weight:400;color:#555555;letter-spacing:0.071px;-webkit-text-stroke:0.75px #fff;">2.3</span>
<div class="a" style="left:3358px;top:0;width:2px;height:1980px;background:#bbbbbc"></div>
<svg class="a" style="left:3346px;top:1966px" width="14" height="14"><path d="M14 0 V14 H0 A12 12 0 0 0 12 2 Z" fill="#1a1a1a"/></svg>
<svg class="a" style="left:0;top:1974px" width="6" height="6"><path d="M0 0 V6 H6 A6 6 0 0 1 0 0 Z" fill="#2a2a22"/></svg>
</body></html>
